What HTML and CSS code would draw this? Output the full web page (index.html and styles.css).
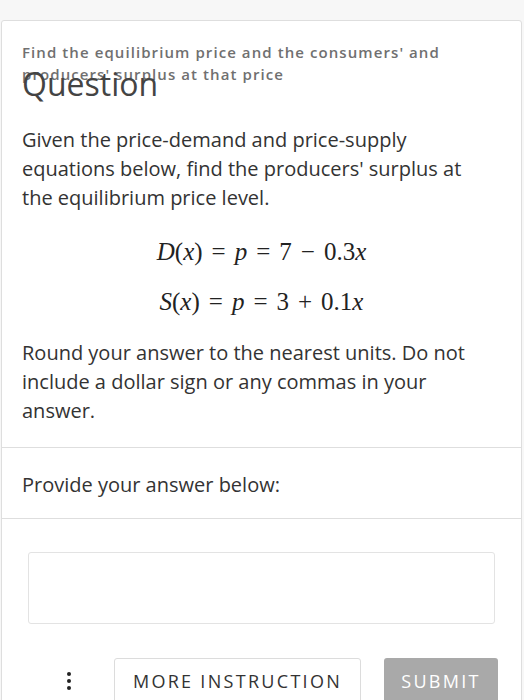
FILE: index.html
```html
<!DOCTYPE html>
<html>
<head>
<meta charset="utf-8">
<link rel="stylesheet" href="styles.css">
</head>
<body>
<div class="card">
  <section class="section question">
    <div class="title">Find the equilibrium price and the consumers' and producers' surplus at that price</div>
    <h1 class="heading">Question</h1>
    <p class="text first">Given the price-demand and price-supply equations below, find the producers' surplus at the equilibrium price level.</p>
    <div class="equations">
      <div class="eq"><span class="i">D</span>(<span class="i">x</span>)<span class="rel">=</span><span class="i">p</span><span class="rel">=</span>7<span class="bin">−</span>0.3<span class="i">x</span></div>
      <div class="eq"><span class="i">S</span>(<span class="i">x</span>)<span class="rel">=</span><span class="i">p</span><span class="rel">=</span>3<span class="bin">+</span>0.1<span class="i">x</span></div>
    </div>
    <p class="text">Round your answer to the nearest units. Do not include a dollar sign or any commas in your answer.</p>
  </section>
  <section class="section prompt">
    <p class="text">Provide your answer below:</p>
  </section>
  <section class="answer">
    <div class="input"></div>
    <div class="actions">
      <button class="more-menu" aria-label="More"><span class="dot"></span><span class="dot"></span><span class="dot"></span></button>
      <button class="btn btn-outline">MORE INSTRUCTION</button>
      <button class="btn btn-submit">SUBMIT</button>
    </div>
  </section>
</div>
</body>
</html>
```

FILE: styles.css
```css
html, body {
  margin: 0;
  padding: 0;
}
body {
  background: #f7f7f7;
  font-family: "Open Sans", "Liberation Sans", sans-serif;
  color: #333;
  height: 700px;
  overflow: hidden;
}
.card {
  margin: 20px 2px 0 1px;
  background: #fff;
  border: 1px solid #dedede;
  border-radius: 3px;
  height: 800px;
}
.section {
  padding: 0 30px 0 20px;
}
.question {
  padding-top: 20px;
  padding-bottom: 22px;
}
.title {
  height: 23px;
  font-size: 15px;
  line-height: 22px;
  font-weight: 600;
  letter-spacing: 1.08px;
  color: #707070;
}
.heading {
  margin: 0;
  font-size: 32px;
  line-height: 40px;
  font-weight: 400;
  color: #444;
}
.text {
  margin: 0;
  font-size: 20px;
  line-height: 29px;
  color: #333;
}
.text.first {
  margin-top: 21px;
}
.equations {
  margin: 15px 0 11px;
  text-align: center;
  font-family: "Liberation Serif", "Times New Roman", serif;
  font-size: 25px;
  line-height: 50px;
  color: #222;
  padding-left: 10px;
}
.i {
  font-style: italic;
}
.rel {
  margin: 0 9px;
}
.bin {
  margin: 0 9px;
}
.prompt {
  border-top: 1px solid #dedede;
  padding-top: 22px;
  padding-bottom: 19px;
}
.answer {
  border-top: 1px solid #dedede;
  padding: 33px 26px 0;
}
.input {
  height: 70px;
  border: 1px solid #e3e3e3;
  border-radius: 3px;
}
.actions {
  display: flex;
  align-items: center;
  margin-top: 34px;
  margin-right: -3px;
}
.more-menu {
  display: flex;
  flex-direction: column;
  align-items: center;
  gap: 3px;
  width: 24px;
  margin-left: 29px;
  padding: 0;
  border: 0;
  background: none;
}
.dot {
  width: 4px;
  height: 4px;
  border-radius: 50%;
  background: #222;
}
.btn {
  height: 46px;
  border-radius: 3px;
  font-family: "Open Sans", "Liberation Sans", sans-serif;
  font-size: 18px;
  letter-spacing: 2.3px;
  padding: 0;
}
.btn-outline {
  width: 247px;
  margin-left: 33px;
  border: 1px solid #dcdcdc;
  background: #fff;
  color: #333;
}
.btn-submit {
  width: 114px;
  margin-left: 23px;
  border: 0;
  background: #a9a9a9;
  color: #fff;
}
```
